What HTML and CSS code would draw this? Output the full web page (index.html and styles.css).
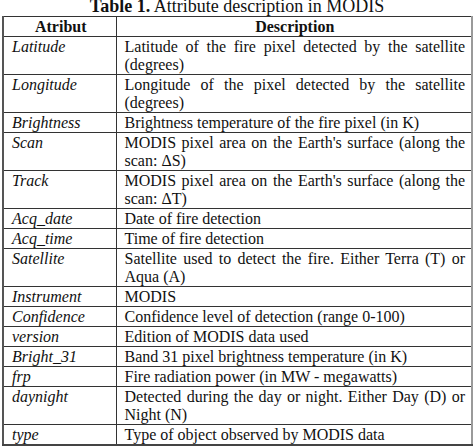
FILE: index.html
```html
<!DOCTYPE html>
<html>
<head>
<meta charset="utf-8">
<link rel="stylesheet" href="styles.css">
</head>
<body>
<div class="caption"><b>Table 1.</b> Attribute description in MODIS</div>
<table class="attr">
<colgroup><col class="c1"><col class="c2"></colgroup>
<thead>
<tr><th>Atribut</th><th>Description</th></tr>
</thead>
<tbody>
<tr><td class="name">Latitude</td><td class="desc">Latitude of the fire pixel detected by the satellite (degrees)</td></tr>
<tr><td class="name">Longitude</td><td class="desc">Longitude of the pixel detected by the satellite (degrees)</td></tr>
<tr><td class="name">Brightness</td><td class="desc">Brightness temperature of the fire pixel (in K)</td></tr>
<tr><td class="name">Scan</td><td class="desc">MODIS pixel area on the Earth's surface (along the scan: ΔS)</td></tr>
<tr><td class="name">Track</td><td class="desc">MODIS pixel area on the Earth's surface (along the scan: ΔT)</td></tr>
<tr><td class="name">Acq_date</td><td class="desc">Date of fire detection</td></tr>
<tr><td class="name">Acq_time</td><td class="desc">Time of fire detection</td></tr>
<tr><td class="name">Satellite</td><td class="desc">Satellite used to detect the fire. Either Terra (T) or Aqua (A)</td></tr>
<tr><td class="name">Instrument</td><td class="desc">MODIS</td></tr>
<tr><td class="name">Confidence</td><td class="desc">Confidence level of detection (range 0-100)</td></tr>
<tr><td class="name">version</td><td class="desc">Edition of MODIS data used</td></tr>
<tr><td class="name">Bright_31</td><td class="desc">Band 31 pixel brightness temperature (in K)</td></tr>
<tr><td class="name">frp</td><td class="desc">Fire radiation power (in MW - megawatts)</td></tr>
<tr><td class="name">daynight</td><td class="desc">Detected during the day or night. Either Day (D) or Night (N)</td></tr>
<tr><td class="name">type</td><td class="desc">Type of object observed by MODIS data</td></tr>
</tbody>
</table>
</body>
</html>
```
FILE: styles.css
```css
html, body {
  margin: 0;
  padding: 0;
  background: #ffffff;
}
body {
  font-family: "Liberation Serif", "Times New Roman", Times, serif;
  font-size: 16px;
  color: #111111;
  overflow: hidden;
}
.caption {
  text-align: center;
  font-size: 18px;
  line-height: 16px;
  margin-top: -2px;
  height: 16px;
  margin-bottom: 2px;
}
.caption b {
  font-weight: bold;
}
.attr {
  border-collapse: collapse;
  margin-left: 2px;
  width: 471px;
  table-layout: fixed;
  border-top: 1px solid #333;
  border-left: 2px solid #555;
  border-right: 2px solid #9a9a9a;
  border-bottom: 2px solid #444;
}
.c1 { width: 113px; }
.attr th, .attr td {
  border: 1px solid #333;
  line-height: 18px;
  padding: 1px 6px 0 8px;
  vertical-align: top;
}
.attr th {
  font-weight: bold;
  text-align: center;
}
.attr td.name {
  font-style: italic;
}
.attr td.desc {
  text-align: justify;
}
```
